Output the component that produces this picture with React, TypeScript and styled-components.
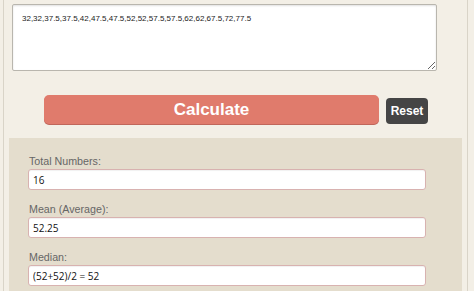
import React from "react";
import styled, { createGlobalStyle } from "styled-components";

const GlobalStyle = createGlobalStyle`
  html, body {
    margin: 0;
    padding: 0;
    background: #f3efe6;
  }
  * { box-sizing: border-box; }
`;

const Wrapper = styled.div`
  margin-left: 3px;
  width: 465px;
  min-height: 291px;
  border-left: 1px solid #d9d4c8;
  border-right: 1px solid #d9d4c8;
  background: #f3efe6;
  padding-top: 4px;
  display: flex;
  flex-direction: column;
`;

const NumbersArea = styled.textarea`
  margin-left: 8px;
  width: 425px;
  height: 67px;
  border: 1px solid #b9b6ae;
  border-radius: 2px;
  background: #fff;
  box-shadow: inset 0 1px 2px rgba(0, 0, 0, 0.12);
  padding: 9px 9px;
  font-family: "Liberation Sans", Arial, sans-serif;
  font-size: 8px;
  line-height: 10px;
  color: #222;
  outline: none;
`;

const ButtonRow = styled.div`
  display: flex;
  align-items: flex-end;
  gap: 7px;
  margin: 24px 0 0 40px;
`;

const CalcButton = styled.button`
  width: 335px;
  height: 29px;
  border: none;
  border-radius: 5px;
  background: #e07b6c;
  box-shadow: 0 1px 0 #c0665a;
  color: #fff;
  font-family: "Liberation Sans", Arial, sans-serif;
  font-weight: bold;
  font-size: 17px;
  padding: 0;
  cursor: pointer;
`;

const ResetButton = styled.button`
  width: 42px;
  height: 26px;
  border: none;
  border-radius: 4px;
  background: #454545;
  color: #fff;
  font-family: "Liberation Sans", Arial, sans-serif;
  font-weight: bold;
  font-size: 12px;
  padding: 0;
  cursor: pointer;
`;

const Results = styled.div`
  flex: 1;
  margin: 14px 5px 0 5px;
  background: #e4ddcd;
  padding: 16px 0 0 19px;
`;

const Field = styled.div`
  margin-bottom: 12px;
`;

const Label = styled.label`
  display: block;
  padding-left: 1px;
  font-family: "Liberation Sans", Arial, sans-serif;
  font-size: 10.7px;
  line-height: 14px;
  color: #666;
`;

const Output = styled.input`
  display: block;
  margin-top: 1px;
  width: 398px;
  height: 21px;
  border: 1px solid #d8b2b0;
  border-radius: 3px;
  background: #fff;
  box-shadow: inset 0 1px 1px rgba(0, 0, 0, 0.06);
  padding: 0 4px;
  font-family: "Open Sans", sans-serif;
  font-size: 10px;
  color: #111;
  outline: none;
`;

const results = [
  { label: "Total Numbers:", value: "16" },
  { label: "Mean (Average):", value: "52.25" },
  { label: "Median:", value: "(52+52)/2 = 52" },
];

export default function App() {
  return (
    <>
      <GlobalStyle />
      <Wrapper>
        <NumbersArea
          defaultValue="32,32,37.5,37.5,42,47.5,47.5,52,52,57.5,57.5,62,62,67.5,72,77.5"
          spellCheck={false}
        />
        <ButtonRow>
          <CalcButton>Calculate</CalcButton>
          <ResetButton>Reset</ResetButton>
        </ButtonRow>
        <Results>
          {results.map((r) => (
            <Field key={r.label}>
              <Label>{r.label}</Label>
              <Output readOnly value={r.value} />
            </Field>
          ))}
        </Results>
      </Wrapper>
    </>
  );
}
